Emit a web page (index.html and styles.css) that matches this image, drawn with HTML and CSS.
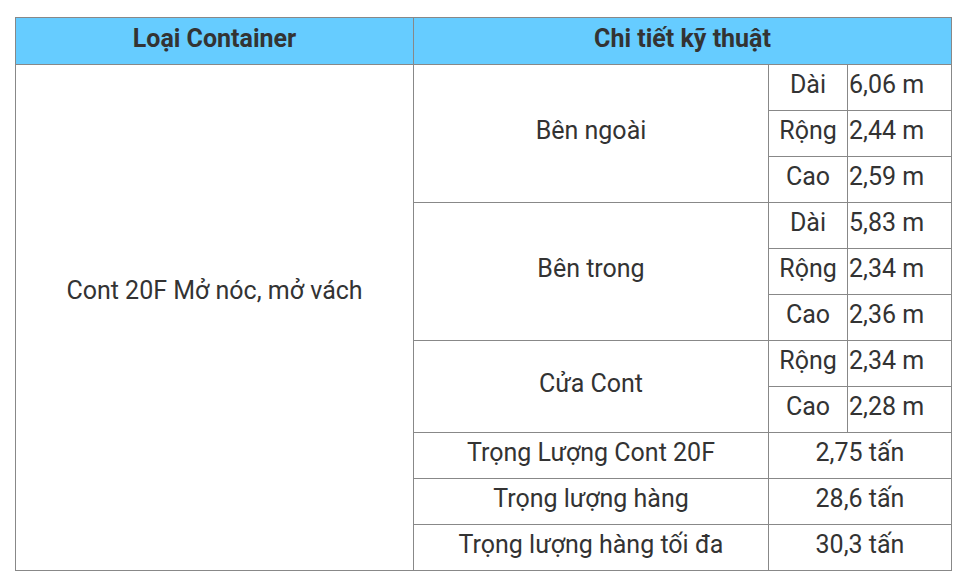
FILE: index.html
```html
<!DOCTYPE html>
<html lang="vi">
<head>
<meta charset="utf-8">
<title>Cont 20F</title>
<link rel="stylesheet" href="styles.css">
</head>
<body>
<table class="spec">
  <colgroup>
    <col class="c1"><col class="c2"><col class="c3"><col class="c4">
  </colgroup>
  <thead>
    <tr><th>Loại Container</th><th colspan="3">Chi tiết kỹ thuật</th></tr>
  </thead>
  <tbody>
    <tr><td rowspan="11" class="type">Cont 20F Mở nóc, mở vách</td><td rowspan="3">Bên ngoài</td><td>Dài</td><td class="val">6,06 m</td></tr>
    <tr><td>Rộng</td><td class="val">2,44 m</td></tr>
    <tr><td>Cao</td><td class="val">2,59 m</td></tr>
    <tr><td rowspan="3">Bên trong</td><td>Dài</td><td class="val">5,83 m</td></tr>
    <tr><td>Rộng</td><td class="val">2,34 m</td></tr>
    <tr><td>Cao</td><td class="val">2,36 m</td></tr>
    <tr><td rowspan="2">Cửa Cont</td><td>Rộng</td><td class="val">2,34 m</td></tr>
    <tr><td>Cao</td><td class="val">2,28 m</td></tr>
    <tr><td>Trọng Lượng Cont 20F</td><td colspan="2">2,75 tấn</td></tr>
    <tr><td>Trọng lượng hàng</td><td colspan="2">28,6 tấn</td></tr>
    <tr><td>Trọng lượng hàng tối đa</td><td colspan="2">30,3 tấn</td></tr>
  </tbody>
</table>
</body>
</html>
```
FILE: styles.css
```css
html, body {
  margin: 0;
  padding: 0;
  background: #ffffff;
}
body {
  font-family: Roboto, "Liberation Sans", sans-serif;
  color: #333333;
}
.spec {
  margin: 17px 0 0 15px;
  width: 937px;
  border-collapse: collapse;
  table-layout: fixed;
  border: 1px solid #222222;
  font-size: 25px;
}
.c1 { width: 398px; }
.c2 { width: 355px; }
.c3 { width: 79px; }
.c4 { width: 104px; }
.spec th, .spec td {
  border: 1px solid #888888;
  padding: 0 1px 6px;
  text-align: center;
  vertical-align: middle;
  height: 46px;
  box-sizing: border-box;
  line-height: 28px;
}
.spec th {
  background: #66ccff;
  font-weight: 700;
  height: 47px;
  padding-bottom: 5px;
  color: #333333;
}
.spec td.type {
  padding-bottom: 54px;
}
.spec td.val {
  text-align: left;
}
```
